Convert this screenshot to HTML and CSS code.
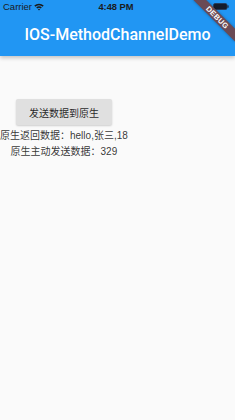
FILE: index.html
```html
<!DOCTYPE html>
<html>
<head>
<meta charset="utf-8">
<link rel="stylesheet" href="styles.css">
</head>
<body>
<div class="screen">
  <header class="appbar">
    <div class="status">
      <div class="carrier">
        <span>Carrier</span>
        <svg class="wifi" width="10" height="8" viewBox="0 0 10 8">
          <path d="M0.3 2.6 A6.6 6.6 0 0 1 9.7 2.6 L8.6 3.7 A5 5 0 0 0 1.4 3.7 Z" fill="#1b1b1b"/>
          <path d="M2.2 4.5 A4 4 0 0 1 7.8 4.5 L6.7 5.6 A2.4 2.4 0 0 0 3.3 5.6 Z" fill="#1b1b1b"/>
          <path d="M3.9 6.3 A1.6 1.6 0 0 1 6.1 6.3 L5 7.5 Z" fill="#1b1b1b"/>
        </svg>
      </div>
      <div class="time">4:48 PM</div>
      <div class="battery-wrap">
        <svg class="battery" width="16" height="7" viewBox="0 0 16 7">
          <rect x="0.5" y="0.5" width="13.5" height="6" rx="1.6" fill="#141c2c" stroke="#2a3650" stroke-width="0.8"/>
          <rect x="14.4" y="2.3" width="1.2" height="2.4" rx="0.5" fill="#1a2438"/>
        </svg>
      </div>
    </div>
    <div class="toolbar">
      <h1 class="title">IOS-MethodChannelDemo</h1>
    </div>
  </header>
  <main class="content">
    <div class="column">
      <button class="btn">发送数据到原生</button>
      <p class="line">原生返回数据：hello,张三,18</p>
      <p class="line">原生主动发送数据：329</p>
    </div>
  </main>
  <div class="banner"><span>DEBUG</span></div>
</div>
</body>
</html>
```
FILE: styles.css
```css
html, body {
  margin: 0;
  padding: 0;
}
body {
  background: #fafafa;
  font-family: "Liberation Sans", "Noto Sans CJK SC", sans-serif;
}
.screen {
  position: relative;
  width: 235px;
  height: 420px;
  overflow: hidden;
  background: #fafafa;
}
.appbar {
  background: #2196F3;
  height: 56px;
  box-shadow: 0 2px 4px rgba(0, 0, 0, 0.22);
  display: flex;
  flex-direction: column;
}
.status {
  height: 13px;
  display: flex;
  align-items: center;
  justify-content: space-between;
  padding: 0 6px 0 3px;
  color: #1b1b1b;
  font-size: 9.5px;
}
.carrier {
  display: flex;
  align-items: center;
  gap: 2px;
  width: 70px;
}
.time {
  font-weight: 700;
  font-size: 9.3px;
}
.battery-wrap {
  width: 70px;
  display: flex;
  justify-content: flex-end;
  align-items: center;
}
.battery {
  display: block;
}
.toolbar {
  flex: 1;
  display: flex;
  align-items: center;
  justify-content: center;
  padding-bottom: 1px;
}
.title {
  margin: 0;
  color: #fff;
  font-family: Roboto, "Liberation Sans", sans-serif;
  font-weight: 500;
  font-size: 16px;
  letter-spacing: 0;
}
.content {
  padding-top: 43px;
}
.column {
  display: inline-flex;
  flex-direction: column;
  align-items: center;
}
.btn {
  width: 96px;
  height: 26px;
  border: none;
  border-radius: 2px;
  background: #e0e0e0;
  box-shadow: 0 1px 2px rgba(0, 0, 0, 0.18);
  font-family: "Liberation Sans", "Noto Sans CJK SC", sans-serif;
  font-size: 10px;
  color: rgba(0, 0, 0, 0.85);
  padding: 0;
  margin-bottom: 3px;
}
.line {
  margin: 0;
  font-size: 10px;
  line-height: 16px;
  color: rgba(0, 0, 0, 0.8);
  white-space: nowrap;
}
.banner {
  position: absolute;
  left: 188px;
  top: 13.2px;
  width: 58.7px;
  height: 8.8px;
  background: #6a4a55;
  transform: rotate(45deg);
  box-shadow: 0 0 3px rgba(0, 0, 0, 0.35);
  display: flex;
  align-items: center;
  justify-content: center;
}
.banner span {
  color: #fff;
  font-family: "Liberation Sans", sans-serif;
  font-weight: 700;
  font-size: 7.5px;
  letter-spacing: 0.2px;
}
```
